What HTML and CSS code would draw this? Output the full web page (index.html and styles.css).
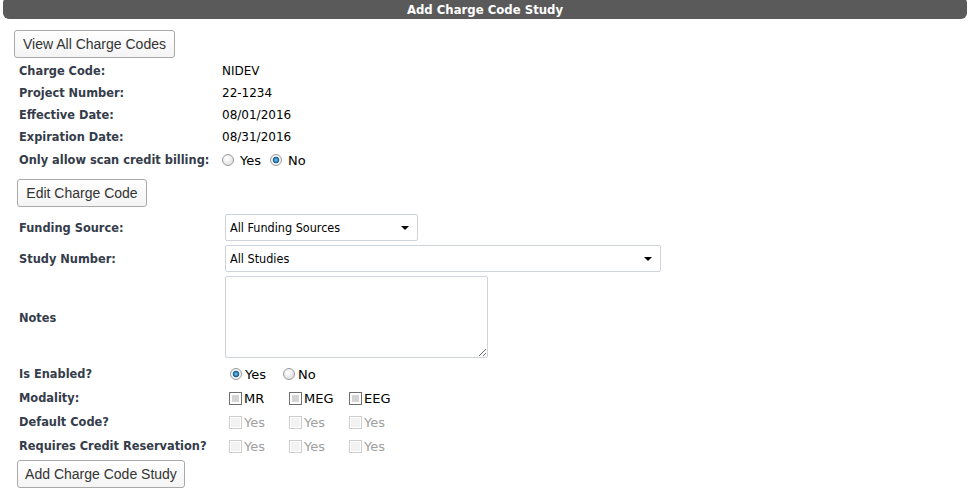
FILE: index.html
```html
<!DOCTYPE html>
<html lang="en">
<head>
    <meta charset="UTF-8">
    <title>Add Charge Code Study</title>
    <link rel="stylesheet" href="styles.css">
</head>
<body>
    <div class="title-bar">Add Charge Code Study</div>
    <div class="page">
        <button type="button" class="btn btn-view">View All Charge Codes</button>
        <table class="info">
            <tr><th>Charge Code:</th><td>NIDEV</td></tr>
            <tr><th>Project Number:</th><td>22-1234</td></tr>
            <tr><th>Effective Date:</th><td>08/01/2016</td></tr>
            <tr><th>Expiration Date:</th><td>08/31/2016</td></tr>
            <tr class="row-billing">
                <th>Only allow scan credit billing:</th>
                <td>
                    <div class="opts">
                        <label class="opt opt-bill"><input type="radio" name="billing"> Yes</label>
                        <label class="opt opt-bill"><input type="radio" name="billing" checked> No</label>
                    </div>
                </td>
            </tr>
        </table>
        <button type="button" class="btn btn-edit">Edit Charge Code</button>
        <table class="study">
            <tr class="row-select">
                <th>Funding Source:</th>
                <td>
                    <span class="select select-funding">
                        <select>
                            <option>All Funding Sources</option>
                        </select>
                    </span>
                </td>
            </tr>
            <tr class="row-select">
                <th>Study Number:</th>
                <td>
                    <span class="select select-study">
                        <select>
                            <option>All Studies</option>
                        </select>
                    </span>
                </td>
            </tr>
            <tr class="row-notes">
                <th>Notes</th>
                <td><textarea></textarea></td>
            </tr>
            <tr class="row-check">
                <th>Is Enabled?</th>
                <td>
                    <div class="opts">
                        <label class="opt opt-radio"><input type="radio" name="enabled" checked> Yes</label>
                        <label class="opt opt-radio"><input type="radio" name="enabled"> No</label>
                    </div>
                </td>
            </tr>
            <tr class="row-check">
                <th>Modality:</th>
                <td>
                    <div class="opts">
                        <label class="opt opt-box"><input type="checkbox">MR</label>
                        <label class="opt opt-box"><input type="checkbox">MEG</label>
                        <label class="opt opt-box"><input type="checkbox">EEG</label>
                    </div>
                </td>
            </tr>
            <tr class="row-check">
                <th>Default Code?</th>
                <td>
                    <div class="opts">
                        <label class="opt opt-box disabled"><input type="checkbox" disabled>Yes</label>
                        <label class="opt opt-box disabled"><input type="checkbox" disabled>Yes</label>
                        <label class="opt opt-box disabled"><input type="checkbox" disabled>Yes</label>
                    </div>
                </td>
            </tr>
            <tr class="row-check">
                <th>Requires Credit Reservation?</th>
                <td>
                    <div class="opts">
                        <label class="opt opt-box disabled"><input type="checkbox" disabled>Yes</label>
                        <label class="opt opt-box disabled"><input type="checkbox" disabled>Yes</label>
                        <label class="opt opt-box disabled"><input type="checkbox" disabled>Yes</label>
                    </div>
                </td>
            </tr>
        </table>
        <button type="button" class="btn btn-add">Add Charge Code Study</button>
    </div>
</body>
</html>
```

FILE: styles.css
```css
body {
    margin: 0;
    font-family: "DejaVu Sans", Verdana, sans-serif;
    font-size: 12px;
    color: #000;
    background: #fff;
}
.title-bar {
    margin: -3px 6px 0 3px;
    height: 22px;
    line-height: 25px;
    border-radius: 6px;
    background-color: #5a5a5a;
    color: #fff;
    text-align: center;
    font-family: "DejaVu Sans Condensed", "DejaVu Sans", sans-serif;
    font-weight: bold;
    font-size: 13px;
}
.page {
    padding: 0 14px;
}
.btn {
    display: block;
    height: 28px;
    padding: 0;
    white-space: nowrap;
    font-family: "Liberation Sans", Arial, sans-serif;
    font-size: 14px;
    color: #333;
    background: linear-gradient(#fff, #f4f4f4);
    border: 1px solid #a9a9a9;
    border-radius: 3px;
    cursor: pointer;
}
.btn-view {
    margin-top: 11px;
    width: 161px;
}
.btn-edit {
    margin: 7px 0 0 3px;
    width: 130px;
}
.btn-add {
    margin: 2px 0 0 3px;
    width: 168px;
}
table {
    border-collapse: collapse;
    margin-left: 5px;
}
th {
    padding: 0;
    text-align: left;
    vertical-align: middle;
    font-size: 11.4px;
    font-weight: bold;
    color: #353c4a;
    white-space: nowrap;
}
td {
    padding: 0;
    vertical-align: middle;
}
.info {
    margin-top: 2px;
}
.info tr {
    height: 22px;
}
.info th {
    width: 203px;
}
.info .row-billing {
    height: 24px;
}
.study {
    margin-top: 5px;
}
.study th {
    width: 206px;
}
.row-select {
    height: 31px;
}
.row-notes {
    height: 88px;
}
.row-notes td {
    vertical-align: top;
    padding-top: 2px;
}
.row-check {
    height: 24px;
}
.opts {
    display: flex;
    align-items: center;
}
.opt {
    display: inline-flex;
    align-items: center;
    font-size: 13px;
    font-family: "DejaVu Sans", Verdana, sans-serif;
}
.opt-bill {
    margin-right: 9px;
}
.opt-bill input[type="radio"] {
    margin-right: 6px;
}
.opt-radio {
    margin-left: 5px;
    margin-right: 12px;
}
.opt-box {
    width: 60px;
    margin-left: 4px;
    margin-right: -4px;
}
.disabled {
    color: #a0a0a0;
}
input[type="radio"] {
    appearance: none;
    width: 12px;
    height: 12px;
    margin: 0 6px 0 0;
    border: 1px solid #9a9a9a;
    border-radius: 50%;
    background: radial-gradient(circle at 40% 35%, #fff, #d8d8d8);
}
input[type="radio"]:checked {
    background: radial-gradient(circle, #7fc4ee 0, #1f6fa8 2.5px, #1a4f78 3.3px, #fff 3.6px, #e4e4e4 6px);
}
.opt-radio input[type="radio"] {
    margin-right: 3px;
}
input[type="checkbox"] {
    appearance: none;
    width: 13px;
    height: 13px;
    margin: 0 2px 0 0;
    border: 1px solid #707070;
    background: #fff;
    box-shadow: inset 0 0 0 2px #fff, inset 0 0 0 6px #d4d4d4;
}
input[type="checkbox"]:disabled {
    border-color: #cdcdcd;
    box-shadow: inset 0 0 0 1px #fff, inset 0 0 0 6px #f2f2f2;
}
.select {
    position: relative;
    display: inline-block;
}
.select::after {
    content: "";
    position: absolute;
    right: 9px;
    top: 12px;
    border-left: 4px solid transparent;
    border-right: 4px solid transparent;
    border-top: 4px solid #000;
    pointer-events: none;
}
select {
    appearance: none;
    display: block;
    height: 27px;
    padding: 0 4px;
    font-family: "DejaVu Sans Condensed", "DejaVu Sans", sans-serif;
    font-size: 12.5px;
    color: #000;
    background: #fff;
    border: 1px solid #cfd3da;
    border-radius: 2px;
}
.select-funding select {
    width: 193px;
}
.select-study select {
    width: 436px;
}
textarea {
    display: block;
    width: 263px;
    height: 82px;
    box-sizing: border-box;
    border: 1px solid #cfd3da;
    border-radius: 2px;
}
```
